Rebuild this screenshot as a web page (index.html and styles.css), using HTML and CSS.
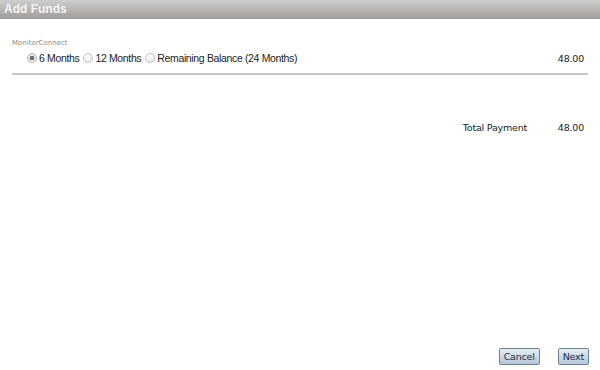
FILE: index.html
```html
<!DOCTYPE html>
<html lang="en">
<head>
  <meta charset="UTF-8">
  <title>Add Funds</title>
  <link rel="stylesheet" href="styles.css">
</head>
<body>
<div class="dialog">
  <div class="title-bar">Add Funds</div>

  <div class="content">
    <!-- Product options -->
    <div class="product">
      <div class="product-name">MonitorConnect</div>
      <div class="product-row">
        <div class="options">
          <label class="option"><input type="radio" name="term" checked>6 Months</label>
          <label class="option"><input type="radio" name="term">12 Months</label>
          <label class="option"><input type="radio" name="term">Remaining Balance (24 Months)</label>
        </div>
        <div class="amount">48.00</div>
      </div>
    </div>

    <!-- Total -->
    <div class="total">
      <span class="total-label">Total Payment</span>
      <span class="total-value">48.00</span>
    </div>
  </div>

  <div class="controls">
    <button class="btn">Cancel</button>
    <button class="btn">Next</button>
  </div>
</div>
</body>
</html>
```

FILE: styles.css
```css
body {
  margin: 0;
  background-color: #ffffff;
  font-family: "Liberation Sans", Arial, sans-serif;
}

.dialog {
  width: 600px;
  height: 370px;
  display: flex;
  flex-direction: column;
}

.title-bar {
  height: 19px;
  line-height: 18px;
  padding-left: 4px;
  background: linear-gradient(#d0cecc, #9f9b97);
  color: #f4f4f4;
  font-weight: bold;
  font-size: 12px;
}

.content {
  flex: 1;
  padding: 20px 12px 0 12px;
}

.product {
  border-bottom: 2px solid #c6c6c6;
  padding-bottom: 9px;
}

.product-name {
  font-family: "DejaVu Sans", Verdana, sans-serif;
  font-size: 7px;
  color: #8a8a8a;
  margin-bottom: 5px;
}

.product-row {
  display: flex;
  justify-content: space-between;
  align-items: center;
  font-size: 10.5px;
  letter-spacing: -0.35px;
  color: #222222;
}

.options {
  padding-left: 15px;
  display: flex;
}

.option {
  display: flex;
  align-items: center;
  margin-right: 4px;
}

.option input {
  appearance: none;
  -webkit-appearance: none;
  width: 10px;
  height: 10px;
  margin: 0 2px 0 0;
  border: 1px solid #c4c4c4;
  border-radius: 50%;
  background: radial-gradient(circle at 40% 35%, #ffffff, #e2e2e2);
}

.option input:checked {
  border-color: #b4b4b4;
  background: radial-gradient(circle, #6a6a6a 0, #6a6a6a 2px, #e6e6e6 2.5px);
}

.amount {
  padding-right: 4px;
  font-family: "DejaVu Sans", Verdana, sans-serif;
  font-size: 9.5px;
  letter-spacing: -0.2px;
}

.total {
  display: flex;
  justify-content: flex-end;
  margin-top: 47px;
  font-family: "DejaVu Sans", Verdana, sans-serif;
  font-size: 9.5px;
  color: #111c2e;
}

.total-label {
  width: 95px;
  letter-spacing: -0.2px;
}

.total-value {
  padding-right: 4px;
  letter-spacing: -0.2px;
  color: #222222;
}

.controls {
  display: flex;
  justify-content: flex-end;
  gap: 18px;
  padding: 0 11px 5px 0;
}

.btn {
  height: 17px;
  padding: 0 4px;
  border: 1px solid #6f8196;
  border-radius: 2px;
  background: linear-gradient(#e6edf4, #b5c6d8);
  font-family: "DejaVu Sans", Verdana, sans-serif;
  font-size: 9.5px;
  letter-spacing: -0.2px;
  color: #1e2a3a;
}
```
